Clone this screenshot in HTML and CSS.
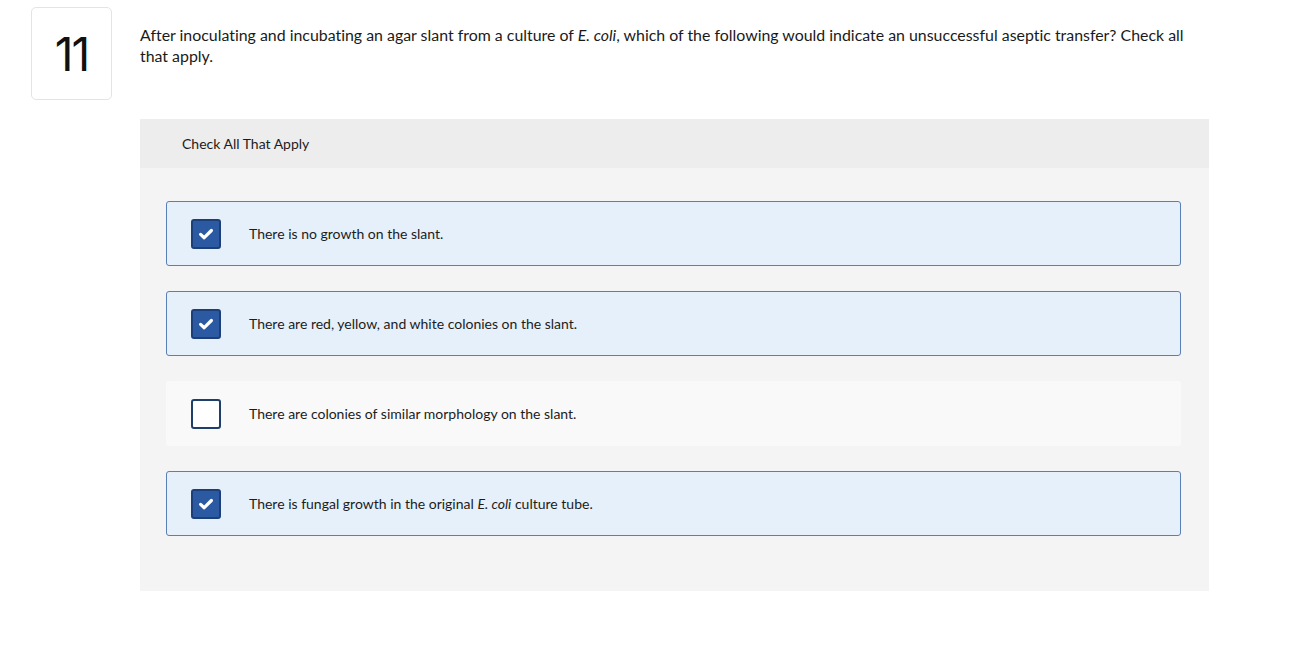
FILE: index.html
```html
<!DOCTYPE html>
<html>
<head>
<meta charset="utf-8">
<link rel="stylesheet" href="styles.css">
</head>
<body>
<div class="page">
  <div class="qnum">11</div>
  <div class="main">
    <p class="prompt">After inoculating and incubating an agar slant from a culture of <i>E. coli</i>, which of the following would indicate an unsuccessful aseptic transfer? Check all that apply.</p>
    <div class="panel">
      <div class="panel-head">Check All That Apply</div>
      <div class="panel-body">
        <div class="opt selected">
          <span class="box checked"><svg viewBox="0 0 16 16" width="16" height="16"><path d="M2.6 8.4 L6.2 11.7 L13.4 4.5" fill="none" stroke="#fff" stroke-width="3.2" stroke-linecap="round" stroke-linejoin="round"/></svg></span>
          <span class="label">There is no growth on the slant.</span>
        </div>
        <div class="opt selected">
          <span class="box checked"><svg viewBox="0 0 16 16" width="16" height="16"><path d="M2.6 8.4 L6.2 11.7 L13.4 4.5" fill="none" stroke="#fff" stroke-width="3.2" stroke-linecap="round" stroke-linejoin="round"/></svg></span>
          <span class="label">There are red, yellow, and white colonies on the slant.</span>
        </div>
        <div class="opt">
          <span class="box"></span>
          <span class="label">There are colonies of similar morphology on the slant.</span>
        </div>
        <div class="opt selected">
          <span class="box checked"><svg viewBox="0 0 16 16" width="16" height="16"><path d="M2.6 8.4 L6.2 11.7 L13.4 4.5" fill="none" stroke="#fff" stroke-width="3.2" stroke-linecap="round" stroke-linejoin="round"/></svg></span>
          <span class="label">There is fungal growth in the original <i>E. coli</i> culture tube.</span>
        </div>
      </div>
    </div>
  </div>
</div>
</body>
</html>
```
FILE: styles.css
```css
* { box-sizing: border-box; }
html, body { margin: 0; padding: 0; background: #fff; }
body {
  font-family: "Lato", "Open Sans", sans-serif;
  color: #1c1c1c;
  font-variant-ligatures: none;
}
.page {
  display: flex;
  align-items: flex-start;
  padding: 7px 0 0 31px;
  gap: 28px;
}
.qnum {
  width: 81px;
  height: 93px;
  border: 1px solid #e4e4e4;
  border-radius: 5px;
  display: flex;
  align-items: center;
  justify-content: center;
  font-family: "Inter", sans-serif;
  font-size: 46px;
  font-weight: 400;
  color: #111;
  letter-spacing: -2px;
  flex: none;
}
.main {
  width: 1069px;
}
.prompt {
  margin: 17px 0 0 0;
  font-size: 15.9px;
  line-height: 21px;
  color: #1a1a1a;
}
.panel {
  margin-top: 53px;
  background: #f4f4f4;
}
.panel-head {
  background: #ededed;
  height: 49px;
  display: flex;
  align-items: center;
  padding-left: 42px;
  font-size: 14px;
  color: #1c1c1c;
}
.panel-body {
  padding: 33px 28px 55px 26px;
  display: flex;
  flex-direction: column;
  gap: 25px;
}
.opt {
  height: 65px;
  background: #f9f9f9;
  border: 1px solid transparent;
  border-radius: 3px;
  display: flex;
  align-items: center;
  padding-left: 24px;
}
.opt.selected {
  background: #e6f0fa;
  border-color: #5a7fb5;
}
.box {
  width: 30px;
  height: 30px;
  border: 2px solid #1f3f6b;
  border-radius: 3px;
  background: #fff;
  display: flex;
  align-items: center;
  justify-content: center;
  flex: none;
}
.box.checked {
  background: #2b5aa3;
  border-color: #1d3f78;
}
.label {
  margin-left: 28px;
  font-size: 14px;
  color: #1c1c1c;
}
```
